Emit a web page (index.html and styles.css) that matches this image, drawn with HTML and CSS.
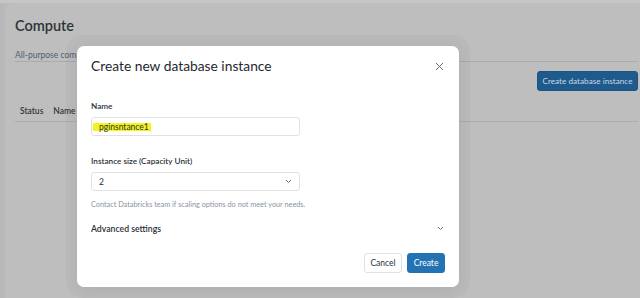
FILE: index.html
```html
<!DOCTYPE html>
<html>
<head>
<meta charset="utf-8">
<link rel="stylesheet" href="styles.css">
</head>
<body>
<div class="topstrip"></div>
<main class="page">
  <h1 class="page-title">Compute</h1>
  <div class="tabs"><span class="tab">All-purpose compute</span></div>
  <div class="toolbar"><button class="btn-primary-dim">Create database instance</button></div>
  <div class="table-head"><span class="th">Status</span><span class="th">Name</span></div>
</main>

<div class="modal">
  <div class="modal-header">
    <h2 class="modal-title">Create new database instance</h2>
    <svg class="close" width="9" height="9" viewBox="0 0 9 9"><path d="M1 1L8 8M8 1L1 8" stroke="#5f6b78" stroke-width="1" fill="none"/></svg>
  </div>
  <div class="field">
    <label class="label">Name</label>
    <div class="input"><span class="hl">pginsntance1</span></div>
  </div>
  <div class="field">
    <label class="label">Instance size (Capacity Unit)</label>
    <div class="input select"><span>2</span>
      <svg class="chev" width="7" height="5" viewBox="0 0 7 5"><path d="M1 1L3.5 3.5L6 1" stroke="#6b7580" stroke-width="1" fill="none"/></svg>
    </div>
    <p class="help">Contact Databricks team if scaling options do not meet your needs.</p>
  </div>
  <div class="advanced">
    <span>Advanced settings</span>
    <svg class="chev" width="7" height="5" viewBox="0 0 7 5"><path d="M1 1L3.5 3.5L6 1" stroke="#6b7580" stroke-width="1" fill="none"/></svg>
  </div>
  <div class="footer">
    <button class="btn-default">Cancel</button>
    <button class="btn-primary">Create</button>
  </div>
</div>
</body>
</html>
```
FILE: styles.css
```css
* { box-sizing: border-box; }
html, body { margin: 0; height: 100%; }
body {
  background: #b9b9b9;
  font-family: "Lato", "Open Sans", sans-serif;
  overflow: hidden;
  position: relative;
}
.topstrip { height: 3px; background: #c6c6c6; }
.page {
  margin-left: 5px;
  height: 295px;
  background: #bebebe;
  border-top-left-radius: 8px;
  padding: 14px 2px 0 10px;
}
.page-title {
  margin: 0;
  font-size: 14.5px;
  font-weight: 600;
  color: #2e3338;
  line-height: 18px;
}
.tabs {
  margin-top: 8px;
  padding-top: 3px;
  border-bottom: 1px solid #a9acaf;
  height: 19px;
  line-height: 12px;
}
.tab { font-size: 8.5px; color: #4f5f72; }
.toolbar { display: flex; justify-content: flex-end; padding-top: 9px; }
.btn-primary-dim {
  background: #1f5a8d;
  color: #c9d6e3;
  border: 1px solid #1d5485;
  border-radius: 3px;
  font-family: inherit;
  font-size: 8.2px;
  height: 20px;
  width: 101px;
  padding: 0;
  white-space: nowrap;
}
.table-head {
  margin-top: 14px;
  height: 17px;
  line-height: 12px;
  border-bottom: 1px solid #adadad;
  display: flex;
  gap: 10px;
  padding-left: 5px;
}
.th { font-size: 8.5px; font-weight: 600; color: #33383d; }

.modal {
  position: absolute;
  left: 77px;
  top: 46px;
  width: 382px;
  height: 241px;
  background: #fff;
  border-radius: 7px;
  box-shadow: 0 0 0 11px rgba(0,0,0,0.025), 0 2px 14px rgba(0,0,0,0.06);
  padding: 10px 14px 0 14px;
}
.modal-header { display: flex; justify-content: space-between; align-items: center; height: 18px; }
.modal-title {
  margin: 0;
  font-size: 13.8px;
  font-weight: 400;
  color: #1f272f;
}
.close { margin-right: 1px; margin-top: 3px; }
.field { margin-top: 26px; }
.field + .field { margin-top: 19px; }
.label {
  display: block;
  font-size: 8.2px;
  font-weight: 600;
  color: #2b3238;
  line-height: 12px;
}
.input {
  margin-top: 5px;
  width: 209px;
  height: 19px;
  border: 1px solid #dfe2e5;
  border-radius: 3px;
  display: flex;
  align-items: center;
  padding-left: 1px;
  font-size: 8.5px;
  color: #2b3238;
}
.hl {
  background: #f4f31a;
  padding: 0 2px 0 6px;
  line-height: 8px;
}
.select { padding-left: 7px; padding-right: 7px; justify-content: space-between; }
.help {
  margin: 9px 0 0;
  font-size: 7.3px;
  color: #8a949e;
  line-height: 10px;
}
.advanced {
  margin-top: 13px;
  display: flex;
  justify-content: space-between;
  align-items: center;
  font-size: 8.7px;
  font-weight: 600;
  color: #2b3238;
  padding-right: 1px;
}
.footer {
  margin-top: 19px;
  display: flex;
  justify-content: flex-end;
  gap: 5px;
}
.btn-default, .btn-primary {
  font-family: inherit;
  font-size: 8.5px;
  height: 20px;
  border-radius: 3px;
  padding: 0;
}
.btn-default { width: 38px; background: #fff; border: 1px solid #dfe2e5; color: #2b3238; }
.btn-primary { width: 38px; background: #2272b4; border: 1px solid #2272b4; color: #fff; }
```
